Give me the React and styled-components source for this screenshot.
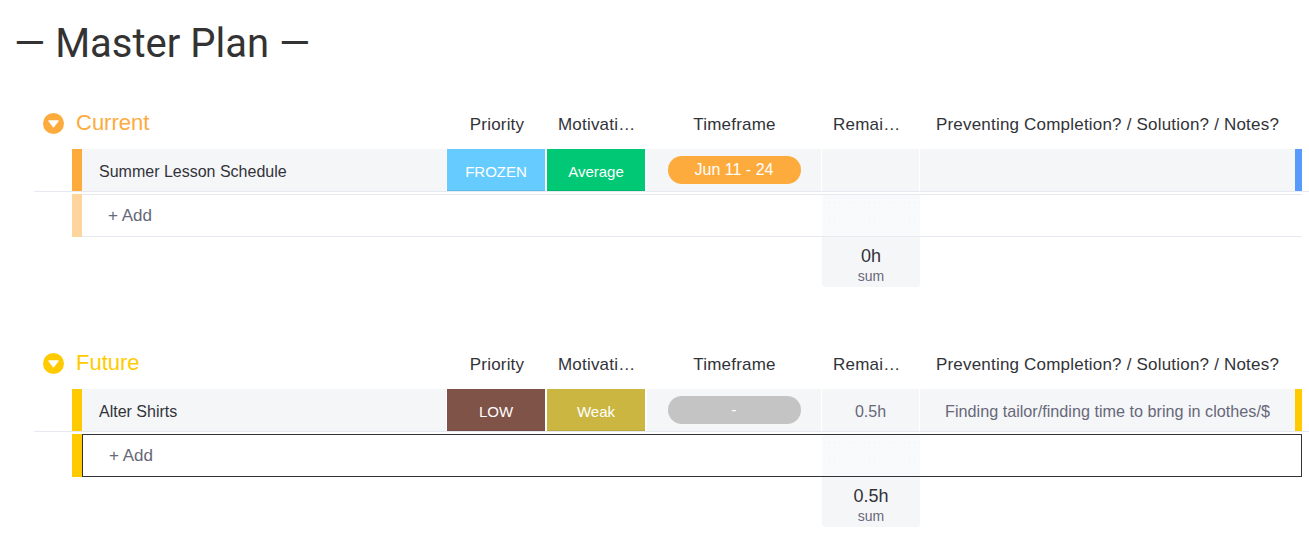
import React from 'react';
import styled, { createGlobalStyle, css } from 'styled-components';

const COLS = '38px 10px 365px 100px 100px 175px 98px 382px';

const Global = createGlobalStyle`
  html, body { margin: 0; padding: 0; background: #fff; }
  body { font-family: "Liberation Sans", Arial, sans-serif; color: #323338; }
  * { box-sizing: border-box; }
`;

const Page = styled.div`
  width: 1309px;
  padding-top: 20px;
  overflow: hidden;
`;

const Title = styled.h1`
  margin: 0 0 0 14px;
  font-family: Roboto, "Liberation Sans", sans-serif;
  font-weight: 400;
  font-size: 40px;
  line-height: 47px;
  color: #333;
  white-space: nowrap;
`;

const Group = styled.section`
  margin-top: ${p => (p.$first ? '36px' : '56px')};
  padding-left: 34px;
`;

const Row = styled.div`
  display: grid;
  grid-template-columns: ${COLS};
`;

const HeaderRow = styled(Row)`
  height: 44px;
  margin-bottom: 2px;
  align-items: center;
`;

const GroupTitle = styled.div`
  grid-column: 1 / span 3;
  display: flex;
  align-items: center;
  gap: 12px;
  padding-left: 9px;
  padding-bottom: 4px;
  font-size: 22px;
  color: ${p => p.$color};
  white-space: nowrap;
`;

const ColHead = styled.div`
  padding: 0 11px;
  font-size: 17px;
  letter-spacing: 0.2px;
  color: #323338;
  text-align: center;
  white-space: nowrap;
  overflow: hidden;
  text-overflow: ellipsis;
  ${p => p.$barPad && css`padding-right: 18px;`}
`;

const ItemRow = styled(Row)`
  height: 43px;
  border-bottom: 1px solid #e6e9ef;
  margin-bottom: 2px;
`;

const Spacer = styled.div``;

const Bar = styled.div`
  background: ${p => p.$color};
`;

const Cell = styled.div`
  display: flex;
  align-items: center;
  justify-content: center;
  background: #f5f6f8;
  border-right: 1px solid #fff;
  font-size: 16px;
  color: #676879;
  white-space: nowrap;
  overflow: hidden;
  padding-top: ${p => (p.$pill ? '0' : '3px')};
`;

const NameCell = styled(Cell)`
  justify-content: flex-start;
  padding-left: 17px;
  color: #323338;
`;

const StatusCell = styled(Cell)`
  background: ${p => p.$color};
  border-right: 2px solid #fff;
  color: #fff;
  font-size: 15px;
  box-shadow: inset 0 -1px 0 rgba(0, 0, 0, 0.08);
`;

const NotesCell = styled(Cell)`
  border-right: 7px solid ${p => p.$color};
  font-size: 16.2px;
`;

const Pill = styled.div`
  width: 133px;
  height: 28px;
  border-radius: 14px;
  display: flex;
  align-items: center;
  justify-content: center;
  background-color: ${p => p.$color};
  ${p => p.$empty && css`
    background-image: radial-gradient(rgba(255, 255, 255, 0.12) 0.5px, transparent 0.7px);
    background-size: 4px 4px;
  `}
  color: #fff;
  font-size: 16px;
`;

const AddRow = styled(Row)`
  height: 43px;
  & > :nth-child(n + 3) {
    border-top: 1px solid ${p => (p.$focus ? '#323338' : '#e6e9ef')};
    border-bottom: 1px solid ${p => (p.$focus ? '#323338' : '#e6e9ef')};
  }
  ${p => p.$focus && css`
    & > :nth-child(3) { border-left: 1px solid #323338; }
    & > :last-child { border-right: 1px solid #323338; }
  `}
`;

const AddCell = styled.div`
  display: flex;
  align-items: center;
  padding-left: 26px;
  padding-top: 1px;
  font-size: 17px;
  color: #676879;
`;

const Blank = styled.div``;

const SumFill = styled.div`
  background-color: #f9fafb;
  background-image: radial-gradient(rgba(0, 0, 0, 0.02) 0.6px, transparent 0.8px);
  background-size: 5px 5px;
`;

const FooterRow = styled(Row)`
  height: 50px;
`;

const SumCell = styled.div`
  grid-column: 7;
  background: #f5f6f8;
  border-radius: 0 0 4px 4px;
  display: flex;
  flex-direction: column;
  align-items: center;
  padding-top: 9px;
`;

const SumValue = styled.div`
  font-size: 18px;
  line-height: 20px;
  color: #323338;
`;

const SumLabel = styled.div`
  font-size: 14px;
  line-height: 18px;
  margin-top: 1px;
  color: #676879;
`;

const CollapseIcon = ({ color }) => (
  <svg width="21" height="21" viewBox="0 0 20 20" aria-hidden="true">
    <circle cx="10" cy="10" r="10" fill={color} />
    <path d="M5.6 7.6 L14.4 7.6 L10 13.2 Z" fill="#fff" stroke="#fff" strokeWidth="1.2" strokeLinejoin="round" />
  </svg>
);

const groups = [
  {
    name: 'Current',
    color: '#fdab3d',
    addBar: '#fed59c',
    focus: false,
    item: {
      name: 'Summer Lesson Schedule',
      priority: { label: 'FROZEN', color: '#66ccff' },
      motivation: { label: 'Average', color: '#00c875' },
      time: { label: 'Jun 11 - 24', color: '#fdab3d' },
      remaining: '',
      notes: '',
      endBar: '#579bfc',
    },
    sum: '0h',
  },
  {
    name: 'Future',
    color: '#ffcb00',
    addBar: '#ffcb00',
    focus: true,
    item: {
      name: 'Alter Shirts',
      priority: { label: 'LOW', color: '#7f5347' },
      motivation: { label: 'Weak', color: '#cab641' },
      time: { label: '-', color: '#c4c4c4', empty: true },
      remaining: '0.5h',
      notes: 'Finding tailor/finding time to bring in clothes/$',
      endBar: '#ffcb00',
    },
    sum: '0.5h',
  },
];

const headings = ['Priority', 'Motivation', 'Timeframe', 'Remaining', 'Preventing Completion? / Solution? / Notes?'];

export default function App() {
  return (
    <Page>
      <Global />
      <Title>— Master Plan —</Title>
      {groups.map((g, i) => (
        <Group key={g.name} $first={i === 0}>
          <HeaderRow>
            <GroupTitle $color={g.color}>
              <CollapseIcon color={g.color} />
              {g.name}
            </GroupTitle>
            {headings.map((h, j) => (
              <ColHead key={h} $barPad={j === headings.length - 1}>{h}</ColHead>
            ))}
          </HeaderRow>
          <ItemRow>
            <Spacer />
            <Bar $color={g.color} />
            <NameCell>{g.item.name}</NameCell>
            <StatusCell $color={g.item.priority.color}>{g.item.priority.label}</StatusCell>
            <StatusCell $color={g.item.motivation.color}>{g.item.motivation.label}</StatusCell>
            <Cell $pill>
              <Pill $color={g.item.time.color} $empty={g.item.time.empty}>{g.item.time.label}</Pill>
            </Cell>
            <Cell>{g.item.remaining}</Cell>
            <NotesCell $color={g.item.endBar}>{g.item.notes}</NotesCell>
          </ItemRow>
          <AddRow $focus={g.focus}>
            <Spacer />
            <Bar $color={g.addBar} />
            <AddCell>+ Add</AddCell>
            <Blank />
            <Blank />
            <Blank />
            <SumFill />
            <Blank />
          </AddRow>
          <FooterRow>
            <SumCell>
              <SumValue>{g.sum}</SumValue>
              <SumLabel>sum</SumLabel>
            </SumCell>
          </FooterRow>
        </Group>
      ))}
    </Page>
  );
}
